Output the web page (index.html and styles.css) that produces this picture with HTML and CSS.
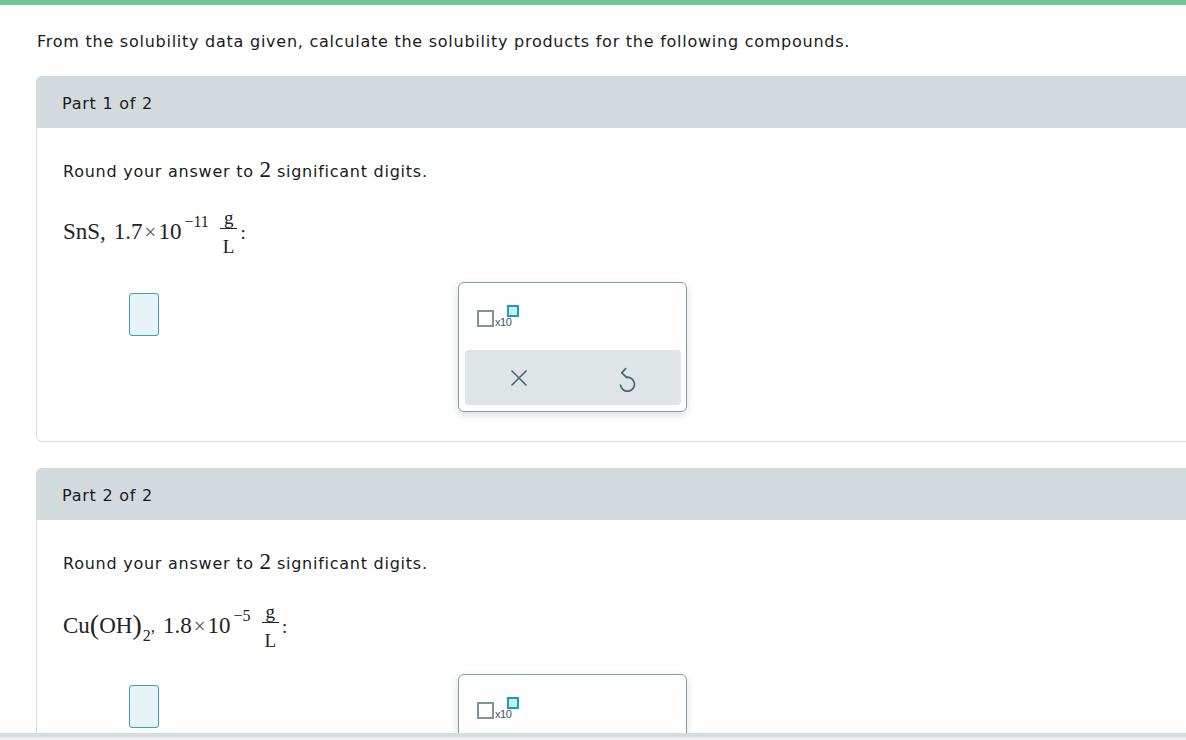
FILE: index.html
```html
<!DOCTYPE html>
<html>
<head>
<meta charset="utf-8">
<link rel="stylesheet" href="styles.css">
</head>
<body>
<div class="topbar"></div>
<main class="page">
  <p class="intro">From the solubility data given, calculate the solubility products for the following compounds.</p>

  <section class="part">
    <div class="part-head">Part 1 of 2</div>
    <div class="part-body">
      <p class="instr">Round your answer to <span class="num">2</span> significant digits.</p>
      <div class="formula"><span>SnS,</span><span class="gap">1.7</span><span class="times">×</span><span>10</span><span class="exp">−11</span><span class="frac"><span class="fn">g</span><span class="fd">L</span></span><span class="colon">:</span></div>
      <div class="answer-row">
        <div class="input-box"></div>
        <div class="popup">
          <div class="popup-top">
            <span class="sci">
              <span class="sci-base"></span><span class="sci-x">x10</span><span class="sci-exp"></span>
            </span>
          </div>
          <div class="popup-actions">
            <span class="act">
              <svg width="18" height="18" viewBox="0 0 18 18"><path d="M2 2 L16 16 M16 2 L2 16" stroke="#4d6972" stroke-width="1.7" fill="none" stroke-linecap="round"/></svg>
            </span>
            <span class="act">
              <svg width="20" height="28" viewBox="0 0 20 28"><path d="M8.6 4.6 L4.8 8.8 L9.6 13.3" stroke="#4d6972" stroke-width="1.8" fill="none" stroke-linecap="round" stroke-linejoin="round"/><path d="M9.6 13.3 A7 7 0 1 1 3.5 21.2" stroke="#4d6972" stroke-width="1.8" fill="none" stroke-linecap="round"/></svg>
            </span>
          </div>
        </div>
      </div>
    </div>
  </section>

  <section class="part">
    <div class="part-head">Part 2 of 2</div>
    <div class="part-body">
      <p class="instr">Round your answer to <span class="num">2</span> significant digits.</p>
      <div class="formula"><span>Cu</span><span class="paren">(</span><span>OH</span><span class="paren">)</span><span class="sub">2</span><span class="comma">,</span><span class="gap">1.8</span><span class="times">×</span><span>10</span><span class="exp">−5</span><span class="frac"><span class="fn">g</span><span class="fd">L</span></span><span class="colon">:</span></div>
      <div class="answer-row">
        <div class="input-box"></div>
        <div class="popup">
          <div class="popup-top">
            <span class="sci">
              <span class="sci-base"></span><span class="sci-x">x10</span><span class="sci-exp"></span>
            </span>
          </div>
          <div class="popup-actions">
            <span class="act">
              <svg width="18" height="18" viewBox="0 0 18 18"><path d="M2 2 L16 16 M16 2 L2 16" stroke="#4d6972" stroke-width="1.7" fill="none" stroke-linecap="round"/></svg>
            </span>
            <span class="act">
              <svg width="20" height="28" viewBox="0 0 20 28"><path d="M8.6 4.6 L4.8 8.8 L9.6 13.3" stroke="#4d6972" stroke-width="1.8" fill="none" stroke-linecap="round" stroke-linejoin="round"/><path d="M9.6 13.3 A7 7 0 1 1 3.5 21.2" stroke="#4d6972" stroke-width="1.8" fill="none" stroke-linecap="round"/></svg>
            </span>
          </div>
        </div>
      </div>
    </div>
  </section>
</main>
<div class="bottombar"></div>
</body>
</html>
```
FILE: styles.css
```css
html, body {
  margin: 0;
  padding: 0;
  background: #fff;
  overflow: hidden;
  height: 740px;
}
body {
  font-family: "DejaVu Sans", Verdana, sans-serif;
  color: #1a1a1a;
  font-size: 16px;
  letter-spacing: 0.75px;
}
.topbar {
  height: 5px;
  background: #71c596;
}
.page {
  padding: 0 0 0 36px;
  width: 1200px;
}
.intro {
  margin: 0;
  padding: 27px 0 0 1px;
  line-height: 20px;
  height: 44px;
}
.part {
  margin-bottom: 26px;
}
.part-head {
  background: #d3dadd;
  height: 52px;
  line-height: 55px;
  padding-left: 26px;
  border-top-left-radius: 6px;
}
.part-body {
  border: 1px solid #d7dee1;
  border-top: none;
  border-bottom-left-radius: 6px;
  padding-left: 26px;
  height: 313px;
}
.instr {
  margin: 0;
  padding-top: 31px;
  line-height: 22px;
  height: 22px;
}
.num {
  font-family: "Liberation Serif", "Times New Roman", serif;
  font-size: 23px;
  letter-spacing: 0;
}
.formula {
  font-family: "Liberation Serif", "Times New Roman", serif;
  font-size: 23px;
  letter-spacing: 0;
  line-height: 50px;
  height: 50px;
  margin-top: 26px;
  white-space: nowrap;
  color: #222;
}
.gap {
  margin-left: 8px;
}
.times {
  font-size: 21px;
  color: #555;
  margin: 0 2px 0 2px;
}
.exp {
  font-size: 16px;
  position: relative;
  top: -12px;
  margin-left: 3px;
  margin-right: 11px;
}
.paren {
  font-size: 28px;
  position: relative;
  top: 1px;
}
.sub {
  font-size: 16px;
  position: relative;
  top: 8px;
  margin-left: 1px;
}
.comma {
  font-size: 17px;
  position: relative;
  top: -1px;
}
.frac {
  display: inline-flex;
  flex-direction: column;
  align-items: center;
  font-size: 19px;
  line-height: 15px;
  vertical-align: 15px;
}
.fn {
  border-bottom: 1px solid #222;
  padding: 0 4px 3px;
}
.fd {
  padding-top: 10px;
}
.colon {
  font-size: 19px;
  margin-left: 3px;
}
.answer-row {
  display: flex;
  align-items: flex-start;
  margin-top: 25px;
}
.input-box {
  width: 28px;
  height: 41px;
  margin-top: 11px;
  margin-left: 66px;
  background: #e6f4f8;
  border: 1px solid #3a9db0;
  border-radius: 3px;
}
.popup {
  margin-left: 299px;
  box-sizing: border-box;
  width: 229px;
  height: 130px;
  border: 1px solid #879ca3;
  border-radius: 6px;
  box-shadow: 0 3px 9px rgba(60, 80, 90, 0.2);
  background: #fff;
  display: flex;
  flex-direction: column;
  padding: 0 5px 6px 6px;
}
.popup-top {
  height: 67px;
  flex: none;
  padding-left: 12px;
  padding-top: 20px;
  box-sizing: border-box;
}
.sci {
  display: inline-flex;
  align-items: flex-start;
}
.sci-base {
  width: 13px;
  height: 13px;
  border: 2px solid #7f959d;
  margin-top: 7px;
}
.sci-x {
  font-family: "Liberation Sans", Arial, sans-serif;
  font-size: 11px;
  line-height: 11px;
  color: #3f565e;
  margin-top: 14px;
  margin-left: 1px;
  letter-spacing: -0.4px;
}
.sci-exp {
  width: 8px;
  height: 8px;
  border: 2px solid #16a0b8;
  background: #c9ebf2;
  margin-left: -5px;
  margin-top: 2px;
}
.popup-actions {
  flex: 1;
  background: #dfe5e7;
  border-radius: 4px;
  display: flex;
  justify-content: space-around;
  align-items: center;
}
.act {
  display: flex;
  width: 20px;
  justify-content: center;
}
.act svg { display: block; }
.bottombar {
  position: fixed;
  left: 0;
  right: 0;
  bottom: 0;
  height: 7px;
  background: #d5dcdf;
  border-bottom: 3px solid #eef1f2;
  box-sizing: border-box;
}
```
